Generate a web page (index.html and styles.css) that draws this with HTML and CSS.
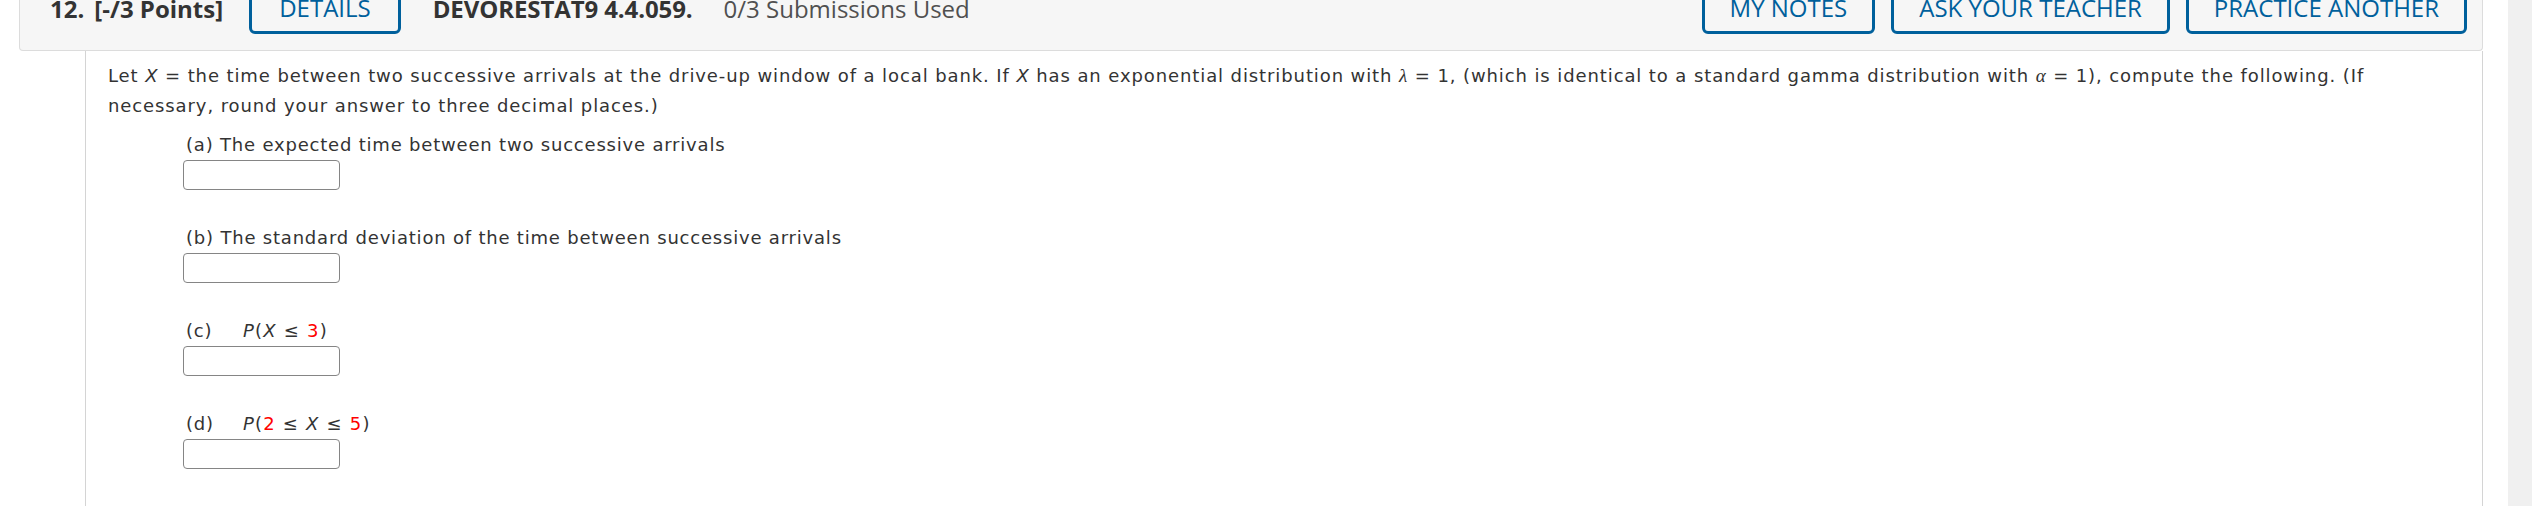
FILE: index.html
```html
<!DOCTYPE html>
<html lang="en">
<head>
<meta charset="utf-8">
<title>Question 12</title>
<link rel="stylesheet" href="styles.css">
</head>
<body>
<div class="page">
  <div class="question">
    <div class="qhead">
      <span class="qnum">12.</span>
      <span class="qpts">[-/3 Points]</span>
      <button class="btn btn-details">DETAILS</button>
      <span class="qcode">DEVORESTAT9 4.4.059.</span>
      <span class="qsub">0/3 Submissions Used</span>
      <div class="actions">
        <button class="btn">MY NOTES</button>
        <button class="btn">ASK YOUR TEACHER</button>
        <button class="btn">PRACTICE ANOTHER</button>
      </div>
    </div>
    <div class="qbody">
      <p class="stem">Let <i>X</i> = the time between two successive arrivals at the drive-up window of a local bank. If <i>X</i> has an exponential distribution with <i class="greek">λ</i> = 1, (which is identical to a standard gamma distribution with <i class="greek">α</i> = 1), compute the following. (If necessary, round your answer to three decimal places.)</p>
      <div class="parts">
        <div class="part">
          <div class="plabel">(a) The expected time between two successive arrivals</div>
          <input class="answer" type="text">
        </div>
        <div class="part">
          <div class="plabel">(b) The standard deviation of the time between successive arrivals</div>
          <input class="answer" type="text">
        </div>
        <div class="part">
          <div class="plabel"><span class="pletter">(c)</span><span class="math"><i>P</i>(<i>X</i> ≤ <span class="red">3</span>)</span></div>
          <input class="answer" type="text">
        </div>
        <div class="part">
          <div class="plabel"><span class="pletter">(d)</span><span class="math"><i>P</i>(<span class="red">2</span> ≤ <i>X</i> ≤ <span class="red">5</span>)</span></div>
          <input class="answer" type="text">
        </div>
      </div>
    </div>
  </div>
  <div class="track"></div>
</div>
</body>
</html>
```
FILE: styles.css
```css
html, body {
  margin: 0;
  padding: 0;
  background: #ffffff;
  overflow: hidden;
}
.page {
  display: flex;
  width: 2532px;
  height: 506px;
}
.question {
  flex: 1;
  margin-left: 19px;
  margin-right: 25px;
  display: flex;
  flex-direction: column;
}
.track {
  width: 24px;
  background: #f0f0f0;
}
.qhead {
  margin-top: -28px;
  background: #f6f6f6;
  border: 1px solid #dcdcdc;
  border-top: none;
  border-radius: 0 0 4px 4px;
  display: flex;
  align-items: center;
  padding: 10px 15px 16px 30px;
  font-family: "Open Sans", "Liberation Sans", sans-serif;
  font-size: 24px;
  color: #333333;
}
.qnum {
  font-weight: 700;
  margin-right: 10px;
}
.qpts {
  font-weight: 700;
}
.qcode {
  font-weight: 700;
  margin-left: 32px;
  letter-spacing: -0.1px;
}
.qsub {
  margin-left: 31px;
  color: #505050;
}
.btn {
  font-family: "Open Sans", "Liberation Sans", sans-serif;
  font-size: 24px;
  line-height: 28px;
  color: #00609c;
  background: transparent;
  border: 3px solid #00609c;
  border-radius: 6px;
  padding: 9px 25px;
  margin: 0;
  text-transform: uppercase;
}
.btn-details {
  margin-left: 26px;
  padding: 9px 27px;
}
.actions {
  margin-left: auto;
  display: flex;
  gap: 16px;
}
.qbody {
  flex: 1;
  margin-left: 66px;
  border-left: 1px solid #d4d4d4;
  border-right: 1px solid #d4d4d4;
  padding: 10px 22px 0 22px;
  font-family: Verdana, "DejaVu Sans", sans-serif;
  font-size: 18px;
  line-height: 30px;
  color: #333333;
}
.stem {
  margin: 0;
  letter-spacing: 0.9px;
}
.stem i, .plabel i {
  font-style: italic;
}
.greek {
  font-family: "Liberation Serif", "DejaVu Serif", serif;
  font-size: 19px;
}
.parts {
  margin-top: 9px;
  padding-left: 78px;
  display: flex;
  flex-direction: column;
  gap: 33px;
}
.part {
  display: flex;
  flex-direction: column;
  align-items: flex-start;
}
.plabel {
  letter-spacing: 0.8px;
}
.pletter {
  display: inline-block;
  width: 57px;
}
.math {
  letter-spacing: 1.2px;
}
.red {
  color: #ff0000;
}
.answer {
  box-sizing: border-box;
  width: 157px;
  height: 30px;
  margin: 0 0 0 -3px;
  border: 1px solid #858585;
  border-radius: 4px;
  background: #ffffff;
  padding: 0 6px;
  font-family: Verdana, "DejaVu Sans", sans-serif;
  font-size: 18px;
}
```
